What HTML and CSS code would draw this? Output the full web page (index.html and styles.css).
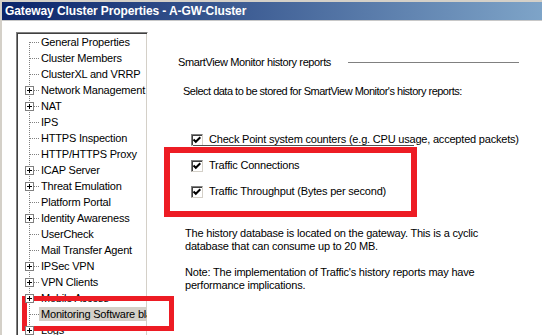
FILE: index.html
```html
<!DOCTYPE html>
<html>
<head>
<meta charset="utf-8">
<link rel="stylesheet" href="styles.css">
</head>
<body>
<div class="window">
  <div class="titlebar">Gateway Cluster Properties - A-GW-Cluster</div>
  <div class="main">
    <div class="tree">
      <ul class="tree-list">
        <li class="node"><span class="label">General Properties</span></li>
        <li class="node"><span class="label">Cluster Members</span></li>
        <li class="node"><span class="label">ClusterXL and VRRP</span></li>
        <li class="node"><span class="exp"></span><span class="label">Network Management</span></li>
        <li class="node"><span class="exp"></span><span class="label">NAT</span></li>
        <li class="node"><span class="label">IPS</span></li>
        <li class="node"><span class="label">HTTPS Inspection</span></li>
        <li class="node"><span class="label">HTTP/HTTPS Proxy</span></li>
        <li class="node"><span class="exp"></span><span class="label">ICAP Server</span></li>
        <li class="node"><span class="exp"></span><span class="label">Threat Emulation</span></li>
        <li class="node"><span class="label">Platform Portal</span></li>
        <li class="node"><span class="exp"></span><span class="label">Identity Awareness</span></li>
        <li class="node"><span class="label">UserCheck</span></li>
        <li class="node"><span class="label">Mail Transfer Agent</span></li>
        <li class="node"><span class="exp"></span><span class="label">IPSec VPN</span></li>
        <li class="node"><span class="exp"></span><span class="label">VPN Clients</span></li>
        <li class="node"><span class="exp"></span><span class="label">Mobile Access</span></li>
        <li class="node"><span class="label selected">Monitoring Software blades</span></li>
        <li class="node"><span class="exp"></span><span class="label">Logs</span></li>
      </ul>
    </div>
    <div class="content">
      <div class="section-head">
        <span class="section-title">SmartView Monitor history reports</span>
        <span class="section-rule"></span>
      </div>
      <p class="intro">Select data to be stored for SmartView Monitor's history reports:</p>
      <div class="checks">
        <div class="check-row">
          <span class="checkbox"><svg width="10" height="10" viewBox="0 0 10 10"><path d="M1.5 4.5 L3.8 6.8 L8.3 2.3" fill="none" stroke="#000" stroke-width="2"/></svg></span>
          <span class="check-label">Check Point system counters (e.g. CPU usage, accepted packets)</span>
        </div>
        <div class="check-row">
          <span class="checkbox"><svg width="10" height="10" viewBox="0 0 10 10"><path d="M1.5 4.5 L3.8 6.8 L8.3 2.3" fill="none" stroke="#000" stroke-width="2"/></svg></span>
          <span class="check-label">Traffic Connections</span>
        </div>
        <div class="check-row">
          <span class="checkbox"><svg width="10" height="10" viewBox="0 0 10 10"><path d="M1.5 4.5 L3.8 6.8 L8.3 2.3" fill="none" stroke="#000" stroke-width="2"/></svg></span>
          <span class="check-label">Traffic Throughput (Bytes per second)</span>
        </div>
      </div>
      <p class="para">The history database is located on the gateway. This is a cyclic<br>database that can consume up to 20 MB.</p>
      <p class="para note">Note: The implementation of Traffic's history reports may have<br>performance implications.</p>
    </div>
  </div>
  <div class="mark mark-tree"></div>
  <div class="mark mark-checks"></div>
</div>
</body>
</html>
```
FILE: styles.css
```css
html, body {
  margin: 0;
  padding: 0;
  background: #fff;
}
body {
  width: 542px;
  height: 335px;
  overflow: hidden;
  font-family: "Liberation Sans", Arial, sans-serif;
  font-size: 11px;
  letter-spacing: -0.2px;
  color: #000;
}
.window {
  position: relative;
  height: 333px;
  border-top: 2px solid #d4d0c8;
  border-left: 2px solid #d4d0c8;
  display: flex;
  flex-direction: column;
  overflow: hidden;
}
.titlebar {
  height: 18px;
  line-height: 18px;
  padding-left: 3px;
  background: linear-gradient(to right, #0a246a, #7ea4c8);
  color: #fff;
  font-weight: bold;
  font-size: 12px;
  letter-spacing: -0.1px;
  border-bottom: 1px solid #c8c8c8;
  white-space: nowrap;
}
.main {
  flex: 1;
  display: flex;
  min-height: 0;
}
.tree {
  margin-left: 14px;
  margin-top: 11px;
  width: 128px;
  height: 320px;
  flex: none;
  border: 1px solid;
  border-color: #808080 #fff #fff #808080;
  box-shadow: inset 1px 1px 0 #404040, inset -1px -1px 0 #d4d0c8;
  padding: 1px;
  overflow: hidden;
}
.tree-list {
  list-style: none;
  margin: 0;
  padding: 0;
  background-image: repeating-linear-gradient(to bottom, #808080 0 1px, transparent 1px 2px);
  background-size: 1px 100%;
  background-position: 11px 8px;
  background-repeat: no-repeat;
}
.node {
  position: relative;
  height: 16px;
  display: flex;
  align-items: center;
  padding-left: 21px;
  white-space: nowrap;
}
.node::before {
  content: "";
  position: absolute;
  left: 12px;
  top: 8px;
  width: 9px;
  height: 1px;
  background: repeating-linear-gradient(to right, #808080 0 1px, transparent 1px 2px);
}
.exp {
  position: absolute;
  left: 7px;
  top: 4px;
  width: 7px;
  height: 7px;
  border: 1px solid #808080;
  background: #fff;
  z-index: 1;
}
.exp::before {
  content: "";
  position: absolute;
  left: 1px;
  top: 3px;
  width: 5px;
  height: 1px;
  background: #000;
}
.exp::after {
  content: "";
  position: absolute;
  left: 3px;
  top: 1px;
  width: 1px;
  height: 5px;
  background: #000;
}
.label {
  padding: 0 2px;
  line-height: 14px;
}
.selected {
  background: #d4d0c8;
  padding-right: 10px;
}
.content {
  flex: 1;
  padding-top: 35px;
  padding-right: 29px;
}
.section-head {
  display: flex;
  align-items: center;
  margin-left: 30px;
  height: 13px;
}
.section-title {
  white-space: nowrap;
  line-height: 13px;
  letter-spacing: -0.38px;
}
.section-rule {
  flex: 1;
  height: 1px;
  margin-left: 17px;
  background: #808080;
}
.intro {
  margin: 16px 0 0 35px;
  line-height: 13px;
  white-space: nowrap;
  letter-spacing: -0.5px;
}
.checks {
  margin: 35px 0 0 43px;
  display: flex;
  flex-direction: column;
  gap: 13px;
}
.check-row {
  display: flex;
  align-items: center;
  height: 13px;
  white-space: nowrap;
}
.checkbox {
  width: 10px;
  height: 10px;
  border: 1px solid;
  border-color: #808080 #d4d0c8 #d4d0c8 #808080;
  box-shadow: inset 1px 1px 0 #404040;
  background: #fff;
  margin-right: 6px;
  display: flex;
  flex: none;
}
.checkbox svg {
  display: block;
}
.check-label {
  line-height: 13px;
}
.para {
  margin: 29px 0 0 37px;
  line-height: 13px;
  white-space: nowrap;
}
.note {
  margin-top: 13px;
}
.mark {
  position: absolute;
  border-style: solid;
  border-color: #ed1c24;
  box-sizing: border-box;
}
.mark-tree {
  left: 20px;
  top: 294px;
  width: 152px;
  height: 35px;
  border-width: 5px;
}
.mark-checks {
  left: 162px;
  top: 145px;
  width: 253px;
  height: 70px;
  border-width: 6px;
}
.mark-checks::before {
  content: "";
  position: absolute;
  left: 23px;
  right: -3px;
  top: -8px;
  height: 1px;
  background: #505050;
}
```
